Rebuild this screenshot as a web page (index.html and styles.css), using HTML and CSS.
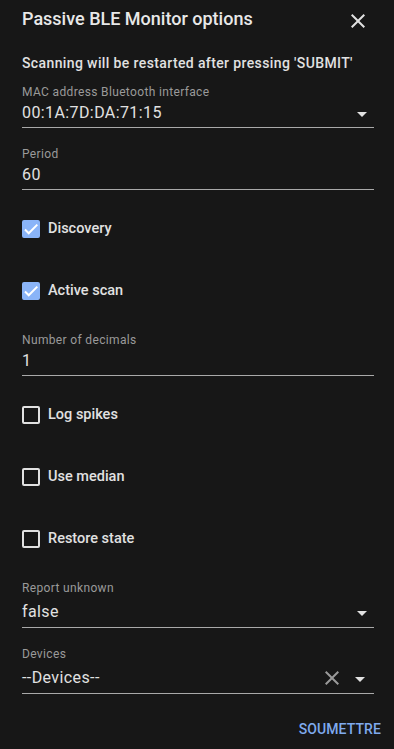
FILE: index.html
```html
<!DOCTYPE html>
<html>
<head>
<meta charset="utf-8">
<link rel="stylesheet" href="styles.css">
</head>
<body>
<div class="dialog">
  <div class="header">
    <div class="title">Passive BLE Monitor options</div>
    <svg class="close" viewBox="0 0 24 24" width="24" height="24"><path d="M19 6.41 17.59 5 12 10.59 6.41 5 5 6.41 10.59 12 5 17.59 6.41 19 12 13.41 17.59 19 19 17.59 13.41 12z"/></svg>
  </div>
  <p class="intro">Scanning will be restarted after pressing 'SUBMIT'</p>
  <div class="fields">
    <div class="field">
      <div class="label">MAC address Bluetooth interface</div>
      <div class="row">
        <span class="value">00:1A:7D:DA:71:15</span>
        <svg class="arrow" viewBox="0 0 24 24" width="24" height="24"><path d="M7 10l5 5 5-5z"/></svg>
      </div>
    </div>
    <div class="field">
      <div class="label">Period</div>
      <div class="row"><span class="value">60</span></div>
    </div>
    <div class="check">
      <span class="box checked"><svg viewBox="0 0 24 24" width="18" height="18"><path class="mark" d="M1.73 12.91 8.1 19.28 22.79 4.59" transform="translate(12 12) scale(0.78) translate(-12 -12)"/></svg></span>
      <span class="clabel">Discovery</span>
    </div>
    <div class="check">
      <span class="box checked"><svg viewBox="0 0 24 24" width="18" height="18"><path class="mark" d="M1.73 12.91 8.1 19.28 22.79 4.59" transform="translate(12 12) scale(0.78) translate(-12 -12)"/></svg></span>
      <span class="clabel">Active scan</span>
    </div>
    <div class="field">
      <div class="label">Number of decimals</div>
      <div class="row"><span class="value">1</span></div>
    </div>
    <div class="check">
      <span class="box"></span>
      <span class="clabel">Log spikes</span>
    </div>
    <div class="check">
      <span class="box"></span>
      <span class="clabel">Use median</span>
    </div>
    <div class="check">
      <span class="box"></span>
      <span class="clabel">Restore state</span>
    </div>
    <div class="field select">
      <div class="label">Report unknown</div>
      <div class="row">
        <span class="value">false</span>
        <svg class="arrow" viewBox="0 0 24 24" width="24" height="24"><path d="M7 10l5 5 5-5z"/></svg>
      </div>
    </div>
    <div class="field select">
      <div class="label">Devices</div>
      <div class="row">
        <span class="value">--Devices--</span>
        <svg class="clear" viewBox="0 0 24 24" width="24" height="24"><path d="M19 6.41 17.59 5 12 10.59 6.41 5 5 6.41 10.59 12 5 17.59 6.41 19 12 13.41 17.59 19 19 17.59 13.41 12z"/></svg>
        <svg class="arrow shifted" viewBox="0 0 24 24" width="24" height="24"><path d="M7 10l5 5 5-5z"/></svg>
      </div>
    </div>
  </div>
  <div class="actions">
    <span class="button">Soumettre</span>
  </div>
</div>
</body>
</html>
```
FILE: styles.css
```css
html, body {
  margin: 0;
  padding: 0;
  background: #171717;
}
body {
  font-family: Roboto, "Noto Sans", sans-serif;
  color: #e1e1e1;
  width: 394px;
  height: 749px;
  overflow: hidden;
}
.dialog {
  padding: 0 20px 0 22px;
}
.header {
  display: flex;
  align-items: flex-start;
  justify-content: space-between;
}
.title {
  font-size: 18px;
  font-weight: 500;
  line-height: 24px;
  padding-top: 7px;
  color: #e8e8e8;
}
.close {
  margin-top: 9px;
  margin-right: 4px;
  fill: #e1e1e1;
}
.intro {
  margin: 20px 0 0;
  font-size: 14px;
  font-weight: 500;
  line-height: 20px;
  letter-spacing: 0.38px;
  color: #e1e1e1;
}
.fields {
  display: flex;
  flex-direction: column;
  gap: 18px;
  margin-top: 11px;
}
.field {
  border-bottom: 1px solid #a9a9a9;
  padding-bottom: 2px;
}
.field .row {
  margin-top: 1px;
}
.field.select {
  padding-bottom: 3px;
}
.field.select .row {
  margin-top: 4px;
}
.label {
  font-size: 12px;
  line-height: 16px;
  letter-spacing: 0.35px;
  color: #9a9a9a;
}
.row {
  display: flex;
  align-items: center;
  height: 24px;
}
.value {
  flex: 1;
  font-size: 16px;
  line-height: 24px;
  letter-spacing: 0.4px;
  color: #e1e1e1;
}
.arrow {
  fill: #e1e1e1;
  margin-top: 2px;
}
.arrow.shifted {
  margin-right: 2px;
}
.clear {
  fill: #9a9a9a;
  margin-right: 4px;
}
.check {
  display: flex;
  align-items: center;
  height: 18px;
  padding: 12px 0 14px;
}
.box {
  width: 18px;
  height: 18px;
  box-sizing: border-box;
  border: 2px solid #e1e1e1;
  border-radius: 2px;
  margin-right: 8px;
  display: flex;
  align-items: center;
  justify-content: center;
}
.box.checked {
  background: #8ab4f8;
  border-color: #8ab4f8;
}
.box svg {
  flex: none;
}
.mark {
  fill: none;
  stroke: #ffffff;
  stroke-width: 3.4;
}
.clabel {
  font-size: 14.5px;
  font-weight: 500;
  line-height: 20px;
  color: #e1e1e1;
}
.actions {
  display: flex;
  justify-content: flex-end;
  margin-top: 25px;
}
.button {
  font-size: 14px;
  font-weight: 500;
  line-height: 20px;
  text-transform: uppercase;
  letter-spacing: 0.1px;
  color: #7faaee;
  margin-right: -7px;
}
```
